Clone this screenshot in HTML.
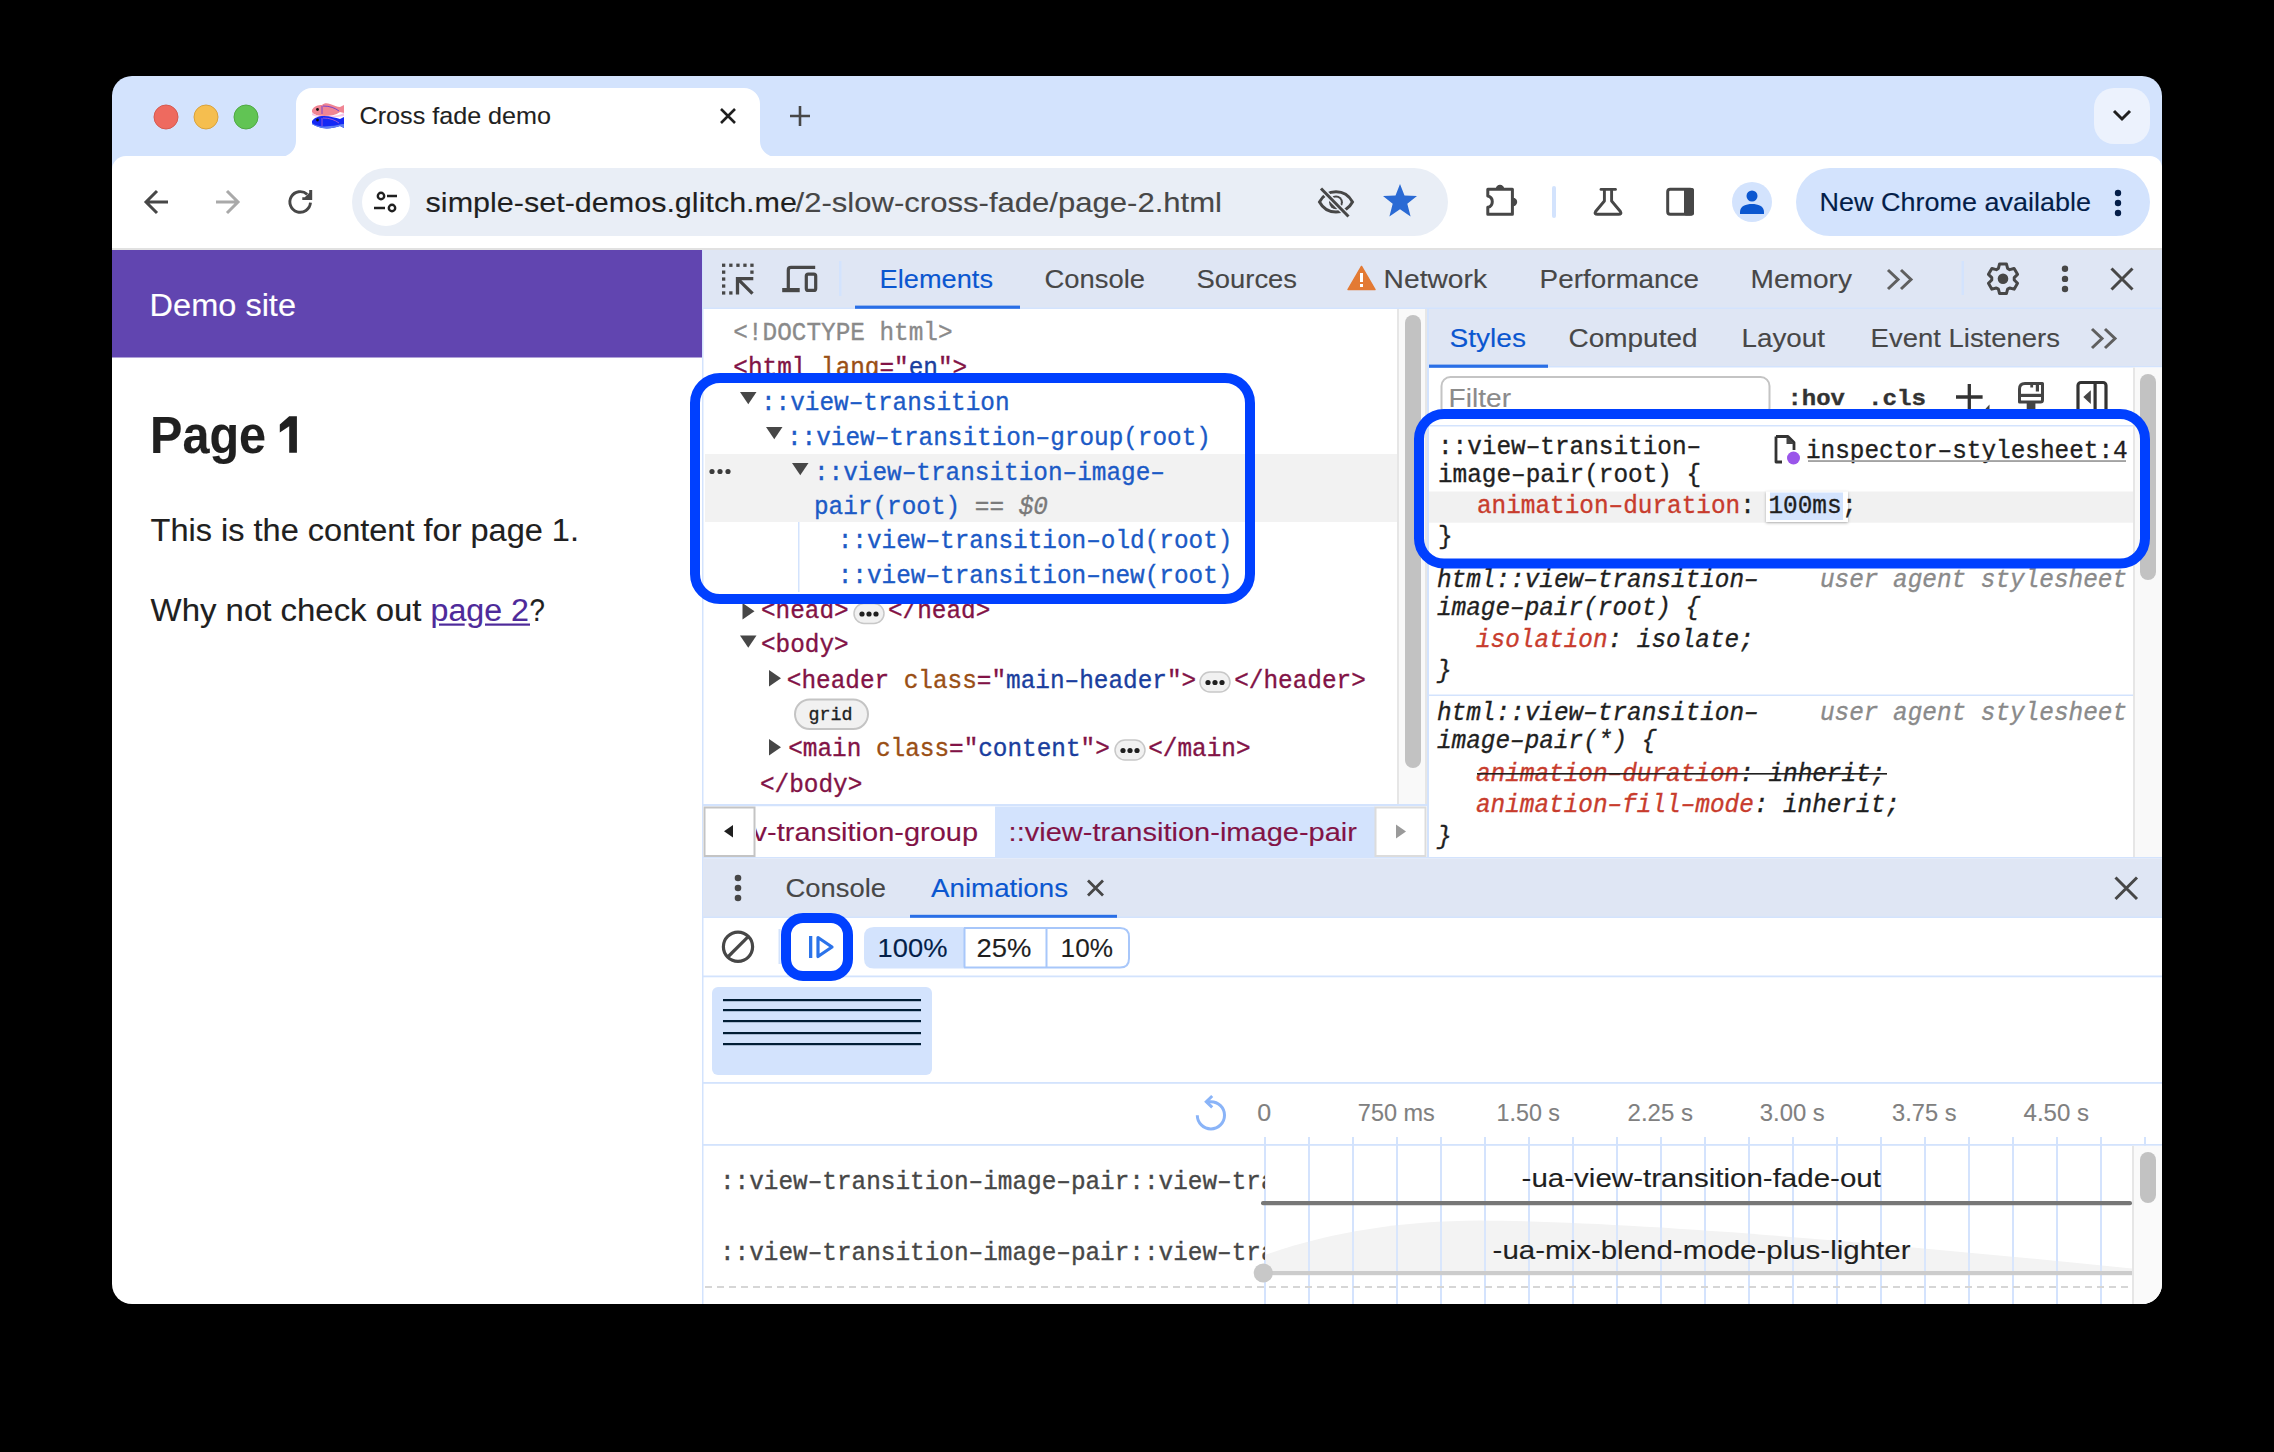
<!DOCTYPE html>
<html lang="en"><head><meta charset="utf-8"><title>Cross fade demo - DevTools</title>
<style>
html,body{margin:0;padding:0;background:#000;width:2274px;height:1452px;overflow:hidden}
svg{display:block;font-family:"Liberation Sans", sans-serif}
text{white-space:pre}
</style></head><body>
<svg width="2274" height="1452" viewBox="0 0 2274 1452">
<defs><filter id="sh" x="-20%" y="-30%" width="140%" height="160%"><feDropShadow dx="0" dy="1" stdDeviation="1.5" flood-color="#000" flood-opacity="0.3"/></filter><clipPath id="win"><rect x="112" y="76" width="2050" height="1228" rx="20"/></clipPath></defs>
<rect x="0" y="0" width="2274" height="1452" fill="#000"/>
<g clip-path="url(#win)">
<rect x="112" y="76" width="2050" height="180" rx="0" fill="#d3e3fd" />
<circle cx="166" cy="117" r="12" fill="#ee6a5f" stroke="#d65a4f" stroke-width="1"/>
<circle cx="206" cy="117" r="12" fill="#f5be4f" stroke="#d9a23c" stroke-width="1"/>
<circle cx="246" cy="117" r="12" fill="#61c454" stroke="#4fa843" stroke-width="1"/>
<path d="M280,157 A16,16 0 0 0 296,141 L296,104 A16,16 0 0 1 312,88 L744,88 A16,16 0 0 1 760,104 L760,141 A16,16 0 0 0 776,157 Z" fill="#ffffff" />
<path d="M312,110 C314,106 318,105 322,105 C324,103 327,103 330,104 C334,105 337,107 340,107 L344,105 L344,113 L340,112 C336,115 330,116 324,116 C319,116 314,115 312,112 Z" fill="#f08593" />
<path d="M312,113 C316,116 322,116 330,116 C336,116 340,115 344,113 L344,116 C338,117 330,118 322,117 C317,117 314,116 312,115 Z" fill="#f5c6ea" />
<circle cx="317.5" cy="109.5" r="1.4" fill="#111"/>
<path d="M322,106 L322,114 M323,106 C330,106 335,108 339,111" fill="none" stroke="#7744cc" stroke-width="1" />
<path d="M312,121 C314,118 318,116 324,116 C330,116 336,118 340,119 L344,117 L344,128 L340,126 C334,128 328,129 322,128 C317,127 314,125 312,124 Z" fill="#1428f5" />
<path d="M312,123 C316,126 322,127 330,126 C336,126 340,124 344,124 L344,128 L340,126 C334,128 328,129 322,128 C317,127 314,125 312,124 Z" fill="#5f7ef2" />
<circle cx="317.5" cy="120" r="1.4" fill="#111"/>
<path d="M322,118 L322,126 M323,118 C330,118 335,120 339,123" fill="none" stroke="#9a55d8" stroke-width="1" />
<text x="359.6" y="124" font-size="24" fill="#1f1f1f" textLength="191.4" lengthAdjust="spacingAndGlyphs" stroke="#1f1f1f" stroke-width="0.12" >Cross fade demo</text>
<path d="M721,109 L735,123 M735,109 L721,123" fill="none" stroke="#1f1f1f" stroke-width="2.6" />
<path d="M800,106 L800,126 M790,116 L810,116" fill="none" stroke="#474747" stroke-width="2.6" />
<rect x="2094" y="88" width="56" height="56" rx="20" fill="#ecf2fd" />
<path d="M2114,111 L2122,119 L2130,111" fill="none" stroke="#1f1f1f" stroke-width="3" />
<path d="M112,248 L112,170 A14,14 0 0 1 126,156 L2150,156 A12,12 0 0 1 2162,168 L2162,248 Z" fill="#ffffff" />
<rect x="112" y="248" width="2050" height="2" rx="0" fill="#e1e1e1" />
<path d="M168,202 L146,202 M157,191 L146,202 L157,213" fill="none" stroke="#474747" stroke-width="3" />
<path d="M216,202 L238,202 M227,191 L238,202 L227,213" fill="none" stroke="#a9a9a9" stroke-width="3" />
<path d="M310.46,202.7 A10.3,10.3 0 1 1 307.2,194.4" fill="none" stroke="#474747" stroke-width="2.9" />
<path d="M302.3,197.2 L309.2,197.2 L309.2,190 L312.2,190 L312.2,200 L302.3,200 Z M304.5,197.5 L309.5,192.5 L309.5,197.5 Z" fill="#474747" />
<rect x="352" y="168" width="1096" height="68" rx="34" fill="#e9eef6" />
<circle cx="386" cy="202" r="24" fill="#ffffff"/>
<circle cx="381" cy="196" r="3.2" fill="none" stroke="#1f1f1f" stroke-width="2.4"/>
<path d="M387,196 L397,196 M374,208 L385,208" fill="none" stroke="#1f1f1f" stroke-width="2.6" />
<circle cx="392" cy="208" r="3.2" fill="none" stroke="#1f1f1f" stroke-width="2.4"/>
<text x="425.6" y="212" font-size="28" fill="#1f1f1f" textLength="371.4" lengthAdjust="spacingAndGlyphs" stroke="#1f1f1f" stroke-width="0.12" >simple-set-demos.glitch.me</text>
<text x="795.6" y="212" font-size="28" fill="#474747" textLength="426.4" lengthAdjust="spacingAndGlyphs" stroke="#474747" stroke-width="0.12" >/2-slow-cross-fade/page-2.html</text>
<path d="M1319.5,202 C1323,195.5 1329,191.8 1336,191.8 C1343,191.8 1349,195.5 1352.5,202 C1349,208.5 1343,212 1336,212 C1329,212 1323,208.5 1319.5,202 Z" fill="none" stroke="#474747" stroke-width="3" />
<circle cx="1336" cy="202.3" r="6.9" fill="#474747"/>
<path d="M1332.5,198.8 A4.95,4.95 0 0 1 1339.5,205.8 Z" fill="#e9eef6" />
<path d="M1321,188.5 L1348.5,216.5" fill="none" stroke="#e9eef6" stroke-width="5.6" />
<path d="M1321,188.5 L1348.5,216.5" fill="none" stroke="#474747" stroke-width="3" />
<path d="M1400,184 L1404.5,195.5 L1417,196 L1407.3,203.8 L1410.6,216.5 L1400,209.2 L1389.4,216.5 L1392.7,203.8 L1383,196 L1395.5,195.5 Z" fill="#2a6ad4" />
<path d="M1487.8,189.2 L1512.4,189.2 L1512.4,214.3 L1487.8,214.3 L1487.8,207.3 A5.8,5.8 0 0 0 1487.8,196 Z" fill="none" stroke="#474747" stroke-width="3" stroke-linejoin="round"/>
<path d="M1495.8,189 A4.2,4.2 0 0 1 1504.2,189 Z" fill="#474747" />
<path d="M1513,197.8 A4.2,4.2 0 0 1 1513,206.2 Z" fill="#474747" />
<rect x="1552" y="186" width="4" height="32" rx="2" fill="#d3e3fd" />
<path d="M1601,189.4 L1615.5,189.4" fill="none" stroke="#474747" stroke-width="2.8" stroke-linecap="round"/>
<path d="M1604.4,189.4 L1604.4,201 L1595.6,211.5 Q1594,214.3 1597.5,214.3 L1618.5,214.3 Q1622,214.3 1620.4,211.5 L1611.6,201 L1611.6,189.4" fill="none" stroke="#474747" stroke-width="2.9" stroke-linejoin="round"/>
<rect x="1667.7" y="189.2" width="24.8" height="25.1" rx="2.5" fill="none" stroke="#474747" stroke-width="3"/>
<rect x="1684" y="188" width="10" height="27.5" rx="2" fill="#474747" />
<circle cx="1752" cy="202" r="20" fill="#d3e3fd"/>
<circle cx="1752" cy="196" r="5.5" fill="#0b57d0"/>
<path d="M1740,212 C1740,206 1746,204 1752,204 C1758,204 1764,206 1764,212 L1764,214 L1740,214 Z" fill="#0b57d0" />
<rect x="1796" y="168" width="354" height="68" rx="34" fill="#d3e3fd" />
<text x="1819.6" y="211" font-size="25" fill="#041e49" textLength="271.4" lengthAdjust="spacingAndGlyphs" stroke="#041e49" stroke-width="0.12" >New Chrome available</text>
<circle cx="2118" cy="193" r="3.2" fill="#041e49"/>
<circle cx="2118" cy="203" r="3.2" fill="#041e49"/>
<circle cx="2118" cy="213" r="3.2" fill="#041e49"/>
<rect x="112" y="250" width="590" height="1054" rx="0" fill="#ffffff" />
<rect x="112" y="250" width="590" height="107.5" rx="0" fill="#6145b0" />
<text x="149.6" y="316" font-size="31" fill="#ffffff" textLength="146.4" lengthAdjust="spacingAndGlyphs" stroke="#ffffff" stroke-width="0.12" >Demo site</text>
<text x="150.1" y="452.7" font-size="51" fill="#202020" font-weight="bold" textLength="115.9" lengthAdjust="spacingAndGlyphs" stroke="#202020" stroke-width="0.12" >Page</text>
<path d="M289.2,416.2 L296.9,416.2 L296.9,452.7 L289.2,452.7 L289.2,426.3 L279.8,432.6 L279.8,424.4 Z" fill="#202020" />
<text x="150.6" y="541" font-size="31" fill="#202020" textLength="428.4" lengthAdjust="spacingAndGlyphs" stroke="#202020" stroke-width="0.12" >This is the content for page 1.</text>
<text x="150.6" y="621" font-size="31" fill="#202020" textLength="270.9" lengthAdjust="spacingAndGlyphs" stroke="#202020" stroke-width="0.12" >Why not check out</text>
<text x="430.6" y="621" font-size="31" fill="#4e2a9a" textLength="98.4" lengthAdjust="spacingAndGlyphs" stroke="#4e2a9a" stroke-width="0.12" >page 2</text>
<rect x="439" y="623.5" width="25.69999999999999" height="2.2" rx="0" fill="#4e2a9a" />
<rect x="485" y="623.5" width="45" height="2.2" rx="0" fill="#4e2a9a" />
<text x="529.6" y="621" font-size="31" fill="#202020" textLength="15.4" lengthAdjust="spacingAndGlyphs" stroke="#202020" stroke-width="0.12" >?</text>
<rect x="702" y="250" width="1460" height="1054" rx="0" fill="#ffffff" />
<rect x="702" y="250" width="1.5" height="1054" rx="0" fill="#d3e3fd" />
<rect x="703" y="250" width="1459" height="58" rx="0" fill="#dfe6f4" />
<rect x="703" y="307.5" width="1459" height="1.5" rx="0" fill="#d3e3fd" />
<rect x="722" y="263.6" width="3.3" height="3.3" rx="0" fill="#474747" />
<rect x="729.2" y="263.6" width="3.3" height="3.3" rx="0" fill="#474747" />
<rect x="736.3" y="263.6" width="3.3" height="3.3" rx="0" fill="#474747" />
<rect x="743.3" y="263.6" width="3.3" height="3.3" rx="0" fill="#474747" />
<rect x="750.3" y="263.6" width="3.3" height="3.3" rx="0" fill="#474747" />
<rect x="722" y="270.5" width="3.3" height="3.3" rx="0" fill="#474747" />
<rect x="722" y="277.4" width="3.3" height="3.3" rx="0" fill="#474747" />
<rect x="722" y="284.4" width="3.3" height="3.3" rx="0" fill="#474747" />
<rect x="722" y="291.3" width="3.3" height="3.3" rx="0" fill="#474747" />
<rect x="750.3" y="270.5" width="3.3" height="3.3" rx="0" fill="#474747" />
<rect x="729.2" y="291.3" width="3.3" height="3.3" rx="0" fill="#474747" />
<path d="M737.5,294.6 L737.5,278.6 L753.3,278.6 M738.5,279.6 L752.5,293.6" fill="none" stroke="#474747" stroke-width="3.3" />
<path d="M788.3,290 L788.3,270 Q788.3,267.4 791,267.4 L815.2,267.4" fill="none" stroke="#474747" stroke-width="3.2" />
<rect x="782.2" y="288" width="17.5" height="4.2" rx="0" fill="#474747" />
<rect x="806.3" y="274.1" width="9.4" height="16.3" rx="2" fill="none" stroke="#474747" stroke-width="3.2"/>
<rect x="839" y="261" width="2.5" height="35" rx="0" fill="#d3e3fd" />
<text x="879.6" y="288" font-size="26" fill="#0b57d0" textLength="113.4" lengthAdjust="spacingAndGlyphs" stroke="#0b57d0" stroke-width="0.12" >Elements</text>
<rect x="855" y="305.6" width="165" height="3.2" rx="0" fill="#2a6fe6" />
<text x="1044.6" y="288" font-size="26" fill="#474747" textLength="100.4" lengthAdjust="spacingAndGlyphs" stroke="#474747" stroke-width="0.12" >Console</text>
<text x="1196.6" y="288" font-size="26" fill="#474747" textLength="100.4" lengthAdjust="spacingAndGlyphs" stroke="#474747" stroke-width="0.12" >Sources</text>
<path d="M1361.5,266.5 L1375,289.6 L1348,289.6 Z" fill="#e37a34" stroke="#e37a34" stroke-width="1.5" stroke-linejoin="round"/>
<rect x="1360" y="273" width="3" height="9" rx="0" fill="#ffffff" />
<rect x="1360" y="284" width="3" height="3" rx="0" fill="#ffffff" />
<text x="1383.6" y="288" font-size="26" fill="#474747" textLength="103.4" lengthAdjust="spacingAndGlyphs" stroke="#474747" stroke-width="0.12" >Network</text>
<text x="1539.6" y="288" font-size="26" fill="#474747" textLength="159.4" lengthAdjust="spacingAndGlyphs" stroke="#474747" stroke-width="0.12" >Performance</text>
<text x="1750.6" y="288" font-size="26" fill="#474747" textLength="101.4" lengthAdjust="spacingAndGlyphs" stroke="#474747" stroke-width="0.12" >Memory</text>
<path d="M1888,270 L1898,279.5 L1888,289 M1901,270 L1911,279.5 L1901,289" fill="none" stroke="#5f5f5f" stroke-width="3" />
<rect x="1961.5" y="261" width="2.5" height="34" rx="0" fill="#d3e3fd" />
<polygon points="1998.40,268.48 1999.58,263.99 2006.42,263.99 2007.60,268.48 2009.64,269.66 2014.12,268.43 2017.54,274.36 2014.24,277.62 2014.24,279.98 2017.54,283.24 2014.12,289.17 2009.64,287.94 2007.60,289.12 2006.42,293.61 1999.58,293.61 1998.40,289.12 1996.36,287.94 1991.88,289.17 1988.46,283.24 1991.76,279.98 1991.76,277.62 1988.46,274.36 1991.88,268.43 1996.36,269.66" fill="none" stroke="#474747" stroke-width="3" stroke-linejoin="round"/>
<circle cx="2003" cy="278.8" r="5.3" fill="#474747"/>
<circle cx="2065" cy="268.8" r="3.2" fill="#474747"/>
<circle cx="2065" cy="278.9" r="3.2" fill="#474747"/>
<circle cx="2065" cy="289" r="3.2" fill="#474747"/>
<path d="M2111.5,268.5 L2132.5,289.5 M2132.5,268.5 L2111.5,289.5" fill="none" stroke="#474747" stroke-width="3" />
<rect x="705" y="454" width="692" height="68" rx="0" fill="#f2f2f2" />
<text x="733.3" y="340" font-size="25" fill="#8a8a8a" font-family='"Liberation Mono", monospace' textLength="219.3" lengthAdjust="spacingAndGlyphs" stroke="#8a8a8a" stroke-width="0.35" >&lt;!DOCTYPE html&gt;</text>
<text x="733.3" y="374.5" font-size="25" fill="#821346" font-family='"Liberation Mono", monospace' textLength="73.1" lengthAdjust="spacingAndGlyphs" stroke="#821346" stroke-width="0.35" >&lt;html</text>
<text x="821.02" y="374.5" font-size="25" fill="#9a4f15" font-family='"Liberation Mono", monospace' textLength="58.48" lengthAdjust="spacingAndGlyphs" stroke="#9a4f15" stroke-width="0.35" >lang</text>
<text x="879.5" y="374.5" font-size="25" fill="#821346" font-family='"Liberation Mono", monospace' textLength="29.24" lengthAdjust="spacingAndGlyphs" stroke="#821346" stroke-width="0.35" >="</text>
<text x="908.74" y="374.5" font-size="25" fill="#1a3e9e" font-family='"Liberation Mono", monospace' textLength="29.24" lengthAdjust="spacingAndGlyphs" stroke="#1a3e9e" stroke-width="0.35" >en</text>
<text x="937.98" y="374.5" font-size="25" fill="#821346" font-family='"Liberation Mono", monospace' textLength="29.24" lengthAdjust="spacingAndGlyphs" stroke="#821346" stroke-width="0.35" >"&gt;</text>
<path d="M740,392 L756.5,392 L748.25,404.3 Z" fill="#474747" />
<text x="761" y="409.6" font-size="25" fill="#1b5ac6" font-family='"Liberation Mono", monospace' textLength="248.54" lengthAdjust="spacingAndGlyphs" stroke="#1b5ac6" stroke-width="0.35" >::view–transition</text>
<path d="M766,427 L782.5,427 L774.25,439.3 Z" fill="#474747" />
<text x="787" y="444.6" font-size="25" fill="#1b5ac6" font-family='"Liberation Mono", monospace' textLength="423.98" lengthAdjust="spacingAndGlyphs" stroke="#1b5ac6" stroke-width="0.35" >::view–transition–group(root)</text>
<circle cx="712" cy="471.5" r="2.6" fill="#3c3c3c"/>
<circle cx="720" cy="471.5" r="2.6" fill="#3c3c3c"/>
<circle cx="728" cy="471.5" r="2.6" fill="#3c3c3c"/>
<path d="M792,463 L808.5,463 L800.25,475.3 Z" fill="#474747" />
<text x="814" y="480.2" font-size="25" fill="#1b5ac6" font-family='"Liberation Mono", monospace' textLength="350.88" lengthAdjust="spacingAndGlyphs" stroke="#1b5ac6" stroke-width="0.35" >::view–transition–image–</text>
<text x="814" y="513.6" font-size="25" fill="#1b5ac6" font-family='"Liberation Mono", monospace' textLength="146.2" lengthAdjust="spacingAndGlyphs" stroke="#1b5ac6" stroke-width="0.35" >pair(root)</text>
<text x="960.2" y="513.6" font-size="25" fill="#7a7a7a" font-family='"Liberation Mono", monospace' textLength="58.48" lengthAdjust="spacingAndGlyphs" stroke="#7a7a7a" stroke-width="0.35" > == </text>
<text x="1018.68" y="513.6" font-size="25" fill="#7a7a7a" font-family='"Liberation Mono", monospace' font-style="italic" textLength="29.24" lengthAdjust="spacingAndGlyphs" stroke="#7a7a7a" stroke-width="0.35" >$0</text>
<rect x="798" y="522" width="1.5" height="70" rx="0" fill="#d3e3fd" />
<text x="837.7" y="547.7" font-size="25" fill="#1b5ac6" font-family='"Liberation Mono", monospace' textLength="394.74" lengthAdjust="spacingAndGlyphs" stroke="#1b5ac6" stroke-width="0.35" >::view–transition–old(root)</text>
<text x="837.7" y="582.5" font-size="25" fill="#1b5ac6" font-family='"Liberation Mono", monospace' textLength="394.74" lengthAdjust="spacingAndGlyphs" stroke="#1b5ac6" stroke-width="0.35" >::view–transition–new(root)</text>
<path d="M742.5,603 L754.5,611.2 L742.5,619.4 Z" fill="#474747" />
<text x="761" y="618" font-size="25" fill="#821346" font-family='"Liberation Mono", monospace' textLength="87.72" lengthAdjust="spacingAndGlyphs" stroke="#821346" stroke-width="0.35" >&lt;head&gt;</text>
<rect x="854" y="603.5" width="30" height="20" rx="10.0" fill="#f1f1f1" stroke="#c8c8c8" stroke-width="1.5"/>
<circle cx="862.0" cy="614.0" r="2.6" fill="#1f1f1f"/>
<circle cx="869.0" cy="614.0" r="2.6" fill="#1f1f1f"/>
<circle cx="876.0" cy="614.0" r="2.6" fill="#1f1f1f"/>
<text x="888" y="618" font-size="25" fill="#821346" font-family='"Liberation Mono", monospace' textLength="102.34" lengthAdjust="spacingAndGlyphs" stroke="#821346" stroke-width="0.35" >&lt;/head&gt;</text>
<path d="M740,635.5 L756.5,635.5 L748.25,647.8 Z" fill="#474747" />
<text x="761" y="652" font-size="25" fill="#821346" font-family='"Liberation Mono", monospace' textLength="87.72" lengthAdjust="spacingAndGlyphs" stroke="#821346" stroke-width="0.35" >&lt;body&gt;</text>
<path d="M769,670 L781,678.2 L769,686.4 Z" fill="#474747" />
<text x="786.8" y="687.7" font-size="25" fill="#821346" font-family='"Liberation Mono", monospace' textLength="102.34" lengthAdjust="spacingAndGlyphs" stroke="#821346" stroke-width="0.35" >&lt;header</text>
<text x="903.76" y="687.7" font-size="25" fill="#9a4f15" font-family='"Liberation Mono", monospace' textLength="73.1" lengthAdjust="spacingAndGlyphs" stroke="#9a4f15" stroke-width="0.35" >class</text>
<text x="976.86" y="687.7" font-size="25" fill="#821346" font-family='"Liberation Mono", monospace' textLength="29.24" lengthAdjust="spacingAndGlyphs" stroke="#821346" stroke-width="0.35" >="</text>
<text x="1006.1" y="687.7" font-size="25" fill="#1a3e9e" font-family='"Liberation Mono", monospace' textLength="160.82" lengthAdjust="spacingAndGlyphs" stroke="#1a3e9e" stroke-width="0.35" >main–header</text>
<text x="1166.92" y="687.7" font-size="25" fill="#821346" font-family='"Liberation Mono", monospace' textLength="29.24" lengthAdjust="spacingAndGlyphs" stroke="#821346" stroke-width="0.35" >"&gt;</text>
<rect x="1200" y="672" width="30" height="20" rx="10.0" fill="#f1f1f1" stroke="#c8c8c8" stroke-width="1.5"/>
<circle cx="1208.0" cy="682.5" r="2.6" fill="#1f1f1f"/>
<circle cx="1215.0" cy="682.5" r="2.6" fill="#1f1f1f"/>
<circle cx="1222.0" cy="682.5" r="2.6" fill="#1f1f1f"/>
<text x="1234.2" y="687.7" font-size="25" fill="#821346" font-family='"Liberation Mono", monospace' textLength="131.58" lengthAdjust="spacingAndGlyphs" stroke="#821346" stroke-width="0.35" >&lt;/header&gt;</text>
<rect x="795" y="699.5" width="73" height="29.5" rx="14.75" fill="#f1f1f1" stroke="#c4c4c4" stroke-width="2"/>
<text x="808.5" y="720" font-size="19" fill="#1f1f1f" font-family='"Liberation Mono", monospace' textLength="44" lengthAdjust="spacingAndGlyphs" stroke="#1f1f1f" stroke-width="0.35" >grid</text>
<path d="M769,739 L781,747.2 L769,755.4 Z" fill="#474747" />
<text x="788.2" y="756" font-size="25" fill="#821346" font-family='"Liberation Mono", monospace' textLength="73.1" lengthAdjust="spacingAndGlyphs" stroke="#821346" stroke-width="0.35" >&lt;main</text>
<text x="875.92" y="756" font-size="25" fill="#9a4f15" font-family='"Liberation Mono", monospace' textLength="73.1" lengthAdjust="spacingAndGlyphs" stroke="#9a4f15" stroke-width="0.35" >class</text>
<text x="949.02" y="756" font-size="25" fill="#821346" font-family='"Liberation Mono", monospace' textLength="29.24" lengthAdjust="spacingAndGlyphs" stroke="#821346" stroke-width="0.35" >="</text>
<text x="978.26" y="756" font-size="25" fill="#1a3e9e" font-family='"Liberation Mono", monospace' textLength="102.34" lengthAdjust="spacingAndGlyphs" stroke="#1a3e9e" stroke-width="0.35" >content</text>
<text x="1080.6" y="756" font-size="25" fill="#821346" font-family='"Liberation Mono", monospace' textLength="29.24" lengthAdjust="spacingAndGlyphs" stroke="#821346" stroke-width="0.35" >"&gt;</text>
<rect x="1115" y="740" width="30" height="20" rx="10.0" fill="#f1f1f1" stroke="#c8c8c8" stroke-width="1.5"/>
<circle cx="1123.0" cy="750.5" r="2.6" fill="#1f1f1f"/>
<circle cx="1130.0" cy="750.5" r="2.6" fill="#1f1f1f"/>
<circle cx="1137.0" cy="750.5" r="2.6" fill="#1f1f1f"/>
<text x="1148.2" y="756" font-size="25" fill="#821346" font-family='"Liberation Mono", monospace' textLength="102.34" lengthAdjust="spacingAndGlyphs" stroke="#821346" stroke-width="0.35" >&lt;/main&gt;</text>
<text x="760" y="792" font-size="25" fill="#821346" font-family='"Liberation Mono", monospace' textLength="102.34" lengthAdjust="spacingAndGlyphs" stroke="#821346" stroke-width="0.35" >&lt;/body&gt;</text>
<rect x="1397" y="309" width="30" height="495" rx="0" fill="#f9f9f9" />
<rect x="1397" y="309" width="2" height="495" rx="0" fill="#e6e6e6" />
<rect x="1425" y="309" width="2" height="495" rx="0" fill="#e6e6e6" />
<rect x="1405" y="315" width="16" height="453" rx="8" fill="#c2c2c2" />
<rect x="1427" y="309" width="2" height="549" rx="0" fill="#d3e3fd" />
<rect x="703" y="804" width="724" height="2.5" rx="0" fill="#d3e3fd" />
<rect x="703" y="806.5" width="724" height="50.5" rx="0" fill="#ffffff" />
<rect x="995" y="806.5" width="380" height="50.5" rx="0" fill="#d3e3fd" />
<clipPath id="crumb"><rect x="756" y="806" width="239" height="51"/></clipPath><g clip-path="url(#crumb)">
<text x="752.6" y="841" font-size="26" fill="#821346" textLength="225.4" lengthAdjust="spacingAndGlyphs" stroke="#821346" stroke-width="0.12" >v-transition-group</text>
</g>
<text x="1008.6" y="841" font-size="26" fill="#821346" textLength="348.4" lengthAdjust="spacingAndGlyphs" stroke="#821346" stroke-width="0.12" >::view-transition-image-pair</text>
<rect x="704.5" y="807.5" width="50" height="48.5" rx="0" fill="#ffffff" stroke="#c4c4c4" stroke-width="2"/>
<path d="M733,825 L733,837.5 L724,831.2 Z" fill="#1f1f1f" />
<rect x="1375.5" y="807.5" width="50" height="48.5" rx="0" fill="#ffffff" stroke="#dcdcdc" stroke-width="2"/>
<path d="M1396,824.5 L1406,831.5 L1396,838.5 Z" fill="#9a9a9a" />
<rect x="1429" y="309" width="733" height="58" rx="0" fill="#dfe6f4" />
<rect x="1429" y="366" width="733" height="1.5" rx="0" fill="#d3e3fd" />
<text x="1449.6" y="346.6" font-size="26" fill="#0b57d0" textLength="76.4" lengthAdjust="spacingAndGlyphs" stroke="#0b57d0" stroke-width="0.12" >Styles</text>
<rect x="1429" y="364.6" width="119" height="3.2" rx="0" fill="#2a6fe6" />
<text x="1568.6" y="346.6" font-size="26" fill="#474747" textLength="128.9" lengthAdjust="spacingAndGlyphs" stroke="#474747" stroke-width="0.12" >Computed</text>
<text x="1741.6" y="346.6" font-size="26" fill="#474747" textLength="83.4" lengthAdjust="spacingAndGlyphs" stroke="#474747" stroke-width="0.12" >Layout</text>
<text x="1870.6" y="346.6" font-size="26" fill="#474747" textLength="189.4" lengthAdjust="spacingAndGlyphs" stroke="#474747" stroke-width="0.12" >Event Listeners</text>
<path d="M2092,329 L2102,338.5 L2092,348 M2105,329 L2115,338.5 L2105,348" fill="none" stroke="#5f5f5f" stroke-width="3" />
<rect x="1441.5" y="377" width="328" height="40" rx="9" fill="#ffffff" stroke="#c4c4c4" stroke-width="2"/>
<text x="1448.6" y="407" font-size="26" fill="#8b8b8b" textLength="62.4" lengthAdjust="spacingAndGlyphs" stroke="#8b8b8b" stroke-width="0.12" >Filter</text>
<text x="1787.5" y="404.6" font-size="22" fill="#333333" font-family='"Liberation Mono", monospace' font-weight="bold" textLength="57.5" lengthAdjust="spacingAndGlyphs" stroke="#333333" stroke-width="0.35" >:hov</text>
<text x="1868" y="404.6" font-size="22" fill="#333333" font-family='"Liberation Mono", monospace' font-weight="bold" textLength="58" lengthAdjust="spacingAndGlyphs" stroke="#333333" stroke-width="0.35" >.cls</text>
<path d="M1969.3,384 L1969.3,410 M1956,397 L1982.6,397" fill="none" stroke="#333333" stroke-width="3.3" />
<path d="M1989.5,404.5 L1989.5,411 L1983.5,411 Z" fill="#444444" />
<path d="M2019.5,402 L2019.5,389 Q2019.5,383.4 2025,383.4 L2042.5,383.4 L2042.5,400 Q2042.5,402 2040.5,402 L2021.5,402 Q2019.5,402 2019.5,400 Z" fill="none" stroke="#444444" stroke-width="3" stroke-linejoin="round"/>
<rect x="2020" y="393.8" width="22" height="3.2" rx="0" fill="#444444" />
<rect x="2030.3" y="384" width="2.8" height="3.5" rx="0" fill="#444444" />
<rect x="2035.8" y="384" width="3.2" height="7.5" rx="0" fill="#444444" />
<rect x="2026.7" y="402" width="8.7" height="8" rx="0" fill="#444444" />
<rect x="2078" y="382.5" width="28" height="30" rx="3" fill="none" stroke="#333333" stroke-width="3.2"/>
<rect x="2093.5" y="382.5" width="3.2" height="30" rx="0" fill="#333333" />
<path d="M2090.8,390.2 L2090.8,404 L2083.3,397.1 Z" fill="#444444" />
<rect x="2133" y="367.5" width="29" height="490" rx="0" fill="#f9f9f9" />
<rect x="2133" y="367.5" width="2" height="490" rx="0" fill="#e6e6e6" />
<rect x="2140" y="374" width="16" height="206" rx="8" fill="#c2c2c2" />
<rect x="1429" y="425" width="704" height="1.5" rx="0" fill="#d3e3fd" />
<rect x="1429" y="491.5" width="704" height="31.2" rx="0" fill="#f1f1f1" />
<text x="1438" y="454" font-size="25" fill="#1f1f1f" font-family='"Liberation Mono", monospace' textLength="263.16" lengthAdjust="spacingAndGlyphs" stroke="#1f1f1f" stroke-width="0.35" >::view–transition–</text>
<text x="1438" y="481.6" font-size="25" fill="#1f1f1f" font-family='"Liberation Mono", monospace' textLength="263.16" lengthAdjust="spacingAndGlyphs" stroke="#1f1f1f" stroke-width="0.35" >image–pair(root) {</text>
<text x="1477" y="513.4" font-size="25" fill="#c83c2d" font-family='"Liberation Mono", monospace' textLength="263.16" lengthAdjust="spacingAndGlyphs" stroke="#c83c2d" stroke-width="0.35" >animation–duration</text>
<text x="1740.16" y="513.4" font-size="25" fill="#1f1f1f" font-family='"Liberation Mono", monospace' textLength="14.62" lengthAdjust="spacingAndGlyphs" stroke="#1f1f1f" stroke-width="0.35" >:</text>
<rect x="1766" y="491.5" width="82" height="30.5" rx="0" fill="#ffffff" filter="url(#sh)"/>
<rect x="1770" y="492.5" width="73" height="27.5" rx="0" fill="#d3e3fd" />
<text x="1768.5" y="513.4" font-size="25" fill="#1f1f1f" font-family='"Liberation Mono", monospace' textLength="73.1" lengthAdjust="spacingAndGlyphs" stroke="#1f1f1f" stroke-width="0.35" >100ms</text>
<text x="1842" y="513.4" font-size="25" fill="#1f1f1f" font-family='"Liberation Mono", monospace' textLength="14.62" lengthAdjust="spacingAndGlyphs" stroke="#1f1f1f" stroke-width="0.35" >;</text>
<text x="1438" y="544.2" font-size="25" fill="#1f1f1f" font-family='"Liberation Mono", monospace' textLength="14.62" lengthAdjust="spacingAndGlyphs" stroke="#1f1f1f" stroke-width="0.35" >}</text>
<path d="M1776,436.5 L1788,436.5 L1794,442.5 L1794,450 M1782,462 L1776,462 L1776,436.5" fill="none" stroke="#333333" stroke-width="2.8" stroke-linejoin="round"/>
<path d="M1786.5,436.5 L1794,444 L1786.5,444 Z" fill="#444444" />
<circle cx="1793.5" cy="458" r="6.5" fill="#9a55ea"/>
<text x="1806" y="457.8" font-size="25" fill="#1f1f1f" font-family='"Liberation Mono", monospace' textLength="321.64" lengthAdjust="spacingAndGlyphs" stroke="#1f1f1f" stroke-width="0.35" >inspector–stylesheet:4</text>
<rect x="1808" y="460.1" width="318" height="1.9" rx="0" fill="#a3a3a3" />
<rect x="1429" y="561.5" width="704" height="1.5" rx="0" fill="#d3e3fd" />
<text x="1437" y="587" font-size="25" fill="#1f1f1f" font-family='"Liberation Mono", monospace' font-style="italic" textLength="321.64" lengthAdjust="spacingAndGlyphs" stroke="#1f1f1f" stroke-width="0.35" >html::view–transition–</text>
<text x="1820" y="587" font-size="25" fill="#8a8a8a" font-family='"Liberation Mono", monospace' font-style="italic" textLength="307.02" lengthAdjust="spacingAndGlyphs" stroke="#8a8a8a" stroke-width="0.35" >user agent stylesheet</text>
<text x="1437" y="614.8" font-size="25" fill="#1f1f1f" font-family='"Liberation Mono", monospace' font-style="italic" textLength="263.16" lengthAdjust="spacingAndGlyphs" stroke="#1f1f1f" stroke-width="0.35" >image–pair(root) {</text>
<text x="1476" y="646.8" font-size="25" fill="#c83c2d" font-family='"Liberation Mono", monospace' font-style="italic" textLength="131.58" lengthAdjust="spacingAndGlyphs" stroke="#c83c2d" stroke-width="0.35" >isolation</text>
<text x="1607.58" y="646.8" font-size="25" fill="#1f1f1f" font-family='"Liberation Mono", monospace' font-style="italic" textLength="146.2" lengthAdjust="spacingAndGlyphs" stroke="#1f1f1f" stroke-width="0.35" >: isolate;</text>
<text x="1437" y="677.8" font-size="25" fill="#1f1f1f" font-family='"Liberation Mono", monospace' font-style="italic" textLength="14.62" lengthAdjust="spacingAndGlyphs" stroke="#1f1f1f" stroke-width="0.35" >}</text>
<rect x="1429" y="694.5" width="704" height="1.5" rx="0" fill="#d3e3fd" />
<text x="1437" y="720" font-size="25" fill="#1f1f1f" font-family='"Liberation Mono", monospace' font-style="italic" textLength="321.64" lengthAdjust="spacingAndGlyphs" stroke="#1f1f1f" stroke-width="0.35" >html::view–transition–</text>
<text x="1820" y="720" font-size="25" fill="#8a8a8a" font-family='"Liberation Mono", monospace' font-style="italic" textLength="307.02" lengthAdjust="spacingAndGlyphs" stroke="#8a8a8a" stroke-width="0.35" >user agent stylesheet</text>
<text x="1437" y="748" font-size="25" fill="#1f1f1f" font-family='"Liberation Mono", monospace' font-style="italic" textLength="219.3" lengthAdjust="spacingAndGlyphs" stroke="#1f1f1f" stroke-width="0.35" >image–pair(*) {</text>
<text x="1476" y="781" font-size="25" fill="#c83c2d" font-family='"Liberation Mono", monospace' font-style="italic" textLength="263.16" lengthAdjust="spacingAndGlyphs" stroke="#c83c2d" stroke-width="0.35" >animation–duration</text>
<text x="1739.16" y="781" font-size="25" fill="#1f1f1f" font-family='"Liberation Mono", monospace' font-style="italic" textLength="146.2" lengthAdjust="spacingAndGlyphs" stroke="#1f1f1f" stroke-width="0.35" >: inherit;</text>
<rect x="1477" y="773" width="410" height="1.6" rx="0" fill="#1f1f1f" />
<text x="1476" y="812" font-size="25" fill="#c83c2d" font-family='"Liberation Mono", monospace' font-style="italic" textLength="277.78" lengthAdjust="spacingAndGlyphs" stroke="#c83c2d" stroke-width="0.35" >animation–fill–mode</text>
<text x="1753.78" y="812" font-size="25" fill="#1f1f1f" font-family='"Liberation Mono", monospace' font-style="italic" textLength="146.2" lengthAdjust="spacingAndGlyphs" stroke="#1f1f1f" stroke-width="0.35" >: inherit;</text>
<text x="1437" y="844" font-size="25" fill="#1f1f1f" font-family='"Liberation Mono", monospace' font-style="italic" textLength="14.62" lengthAdjust="spacingAndGlyphs" stroke="#1f1f1f" stroke-width="0.35" >}</text>
<rect x="703" y="857" width="1459" height="1.5" rx="0" fill="#d3e3fd" />
<rect x="703" y="858.5" width="1459" height="58.5" rx="0" fill="#dfe6f4" />
<rect x="703" y="916.5" width="1459" height="1.5" rx="0" fill="#d3e3fd" />
<circle cx="738" cy="878" r="3.3" fill="#474747"/>
<circle cx="738" cy="888" r="3.3" fill="#474747"/>
<circle cx="738" cy="898" r="3.3" fill="#474747"/>
<text x="785.6" y="897" font-size="26" fill="#474747" textLength="100.4" lengthAdjust="spacingAndGlyphs" stroke="#474747" stroke-width="0.12" >Console</text>
<text x="931.1" y="897" font-size="26" fill="#0b57d0" textLength="136.9" lengthAdjust="spacingAndGlyphs" stroke="#0b57d0" stroke-width="0.12" >Animations</text>
<path d="M1088,880.5 L1103,895.5 M1103,880.5 L1088,895.5" fill="none" stroke="#474747" stroke-width="2.8" />
<rect x="910" y="914.8" width="207" height="3.0" rx="0" fill="#2a6fe6" />
<path d="M2115.5,877.5 L2137,899 M2137,877.5 L2115.5,899" fill="none" stroke="#474747" stroke-width="3" />
<circle cx="738" cy="946.8" r="14.6" fill="none" stroke="#474747" stroke-width="3.2"/>
<path d="M727.8,957 L748.2,936.6" fill="none" stroke="#474747" stroke-width="3.2" />
<rect x="778.5" y="929" width="2" height="35" rx="0" fill="#d3e3fd" />
<rect x="809" y="936" width="3.3" height="22" rx="0" fill="#2b73ea" />
<path d="M818,937.5 L832,947 L818,956.5 Z" fill="none" stroke="#2b73ea" stroke-width="3.2" stroke-linejoin="round"/>
<path d="M964,928 L1120,928 Q1129,928 1129,937 L1129,958.5 Q1129,967.5 1120,967.5 L964,967.5" fill="none" stroke="#a8c7fa" stroke-width="2" />
<path d="M874,927 L964,927 L964,968.5 L874,968.5 Q864,968.5 864,958.5 L864,937 Q864,927 874,927 Z" fill="#d3e3fd" />
<rect x="963.5" y="928" width="2" height="39.5" rx="0" fill="#a8c7fa" />
<rect x="1045.5" y="928" width="2" height="39.5" rx="0" fill="#a8c7fa" />
<text x="877.6" y="957" font-size="26" fill="#041e49" textLength="69.9" lengthAdjust="spacingAndGlyphs" stroke="#041e49" stroke-width="0.12" >100%</text>
<text x="976.6" y="957" font-size="26" fill="#1f1f1f" textLength="54.9" lengthAdjust="spacingAndGlyphs" stroke="#1f1f1f" stroke-width="0.12" >25%</text>
<text x="1060.6" y="957" font-size="26" fill="#1f1f1f" textLength="52.4" lengthAdjust="spacingAndGlyphs" stroke="#1f1f1f" stroke-width="0.12" >10%</text>
<rect x="703" y="975.5" width="1459" height="1.8" rx="0" fill="#d3e3fd" />
<rect x="712" y="987" width="220" height="88" rx="6" fill="#d3e3fd" />
<rect x="723" y="999" width="198" height="2.2" rx="0" fill="#001d35" />
<rect x="723" y="1009" width="198" height="2.2" rx="0" fill="#001d35" />
<rect x="723" y="1020" width="198" height="2.2" rx="0" fill="#001d35" />
<rect x="723" y="1032" width="198" height="2.2" rx="0" fill="#001d35" />
<rect x="723" y="1043" width="198" height="2.2" rx="0" fill="#001d35" />
<rect x="703" y="1082" width="1459" height="1.8" rx="0" fill="#d3e3fd" />
<path d="M1197.3,1115.3 A13.6,13.6 0 1 0 1210.9,1101.7 L1206,1101.7" fill="none" stroke="#8ab4f8" stroke-width="3" />
<path d="M1212.2,1096 L1206.3,1101.7 L1212.2,1107.4" fill="none" stroke="#8ab4f8" stroke-width="3" stroke-linejoin="miter"/>
<text x="1257.35" y="1121" font-size="23" fill="#808080" textLength="13.9" lengthAdjust="spacingAndGlyphs" stroke="#808080" stroke-width="0.12" >0</text>
<text x="1357.85" y="1121" font-size="23" fill="#808080" textLength="76.9" lengthAdjust="spacingAndGlyphs" stroke="#808080" stroke-width="0.12" >750 ms</text>
<text x="1496.6" y="1121" font-size="23" fill="#808080" textLength="63.4" lengthAdjust="spacingAndGlyphs" stroke="#808080" stroke-width="0.12" >1.50 s</text>
<text x="1627.6" y="1121" font-size="23" fill="#808080" textLength="65.4" lengthAdjust="spacingAndGlyphs" stroke="#808080" stroke-width="0.12" >2.25 s</text>
<text x="1759.85" y="1121" font-size="23" fill="#808080" textLength="64.9" lengthAdjust="spacingAndGlyphs" stroke="#808080" stroke-width="0.12" >3.00 s</text>
<text x="1892.1" y="1121" font-size="23" fill="#808080" textLength="64.4" lengthAdjust="spacingAndGlyphs" stroke="#808080" stroke-width="0.12" >3.75 s</text>
<text x="2023.6" y="1121" font-size="23" fill="#808080" textLength="65.4" lengthAdjust="spacingAndGlyphs" stroke="#808080" stroke-width="0.12" >4.50 s</text>
<rect x="1264" y="1137" width="2" height="167" rx="0" fill="#d3e3fd" />
<rect x="1308" y="1137" width="2" height="167" rx="0" fill="#d3e3fd" />
<rect x="1352" y="1137" width="2" height="167" rx="0" fill="#d3e3fd" />
<rect x="1396" y="1137" width="2" height="167" rx="0" fill="#d3e3fd" />
<rect x="1440" y="1137" width="2" height="167" rx="0" fill="#d3e3fd" />
<rect x="1484" y="1137" width="2" height="167" rx="0" fill="#d3e3fd" />
<rect x="1528" y="1137" width="2" height="167" rx="0" fill="#d3e3fd" />
<rect x="1572" y="1137" width="2" height="167" rx="0" fill="#d3e3fd" />
<rect x="1616" y="1137" width="2" height="167" rx="0" fill="#d3e3fd" />
<rect x="1660" y="1137" width="2" height="167" rx="0" fill="#d3e3fd" />
<rect x="1704" y="1137" width="2" height="167" rx="0" fill="#d3e3fd" />
<rect x="1748" y="1137" width="2" height="167" rx="0" fill="#d3e3fd" />
<rect x="1792" y="1137" width="2" height="167" rx="0" fill="#d3e3fd" />
<rect x="1836" y="1137" width="2" height="167" rx="0" fill="#d3e3fd" />
<rect x="1880" y="1137" width="2" height="167" rx="0" fill="#d3e3fd" />
<rect x="1924" y="1137" width="2" height="167" rx="0" fill="#d3e3fd" />
<rect x="1968" y="1137" width="2" height="167" rx="0" fill="#d3e3fd" />
<rect x="2012" y="1137" width="2" height="167" rx="0" fill="#d3e3fd" />
<rect x="2056" y="1137" width="2" height="167" rx="0" fill="#d3e3fd" />
<rect x="2100" y="1137" width="2" height="167" rx="0" fill="#d3e3fd" />
<rect x="2144" y="1137" width="2" height="167" rx="0" fill="#d3e3fd" />
<rect x="703" y="1144" width="1429" height="1.8" rx="0" fill="#d3e3fd" />
<rect x="2132" y="1144" width="30" height="1.8" rx="0" fill="#d3e3fd" />
<path d="M1265,1273 L1265,1255 C1330,1232 1400,1221 1480,1220.5 C1650,1222 1900,1245 2132,1268.5 L2132,1273 Z" fill="#f3f3f3" />
<rect x="1264" y="1145.8" width="2" height="160" rx="0" fill="#d3e3fd" opacity="0.85"/>
<rect x="1308" y="1145.8" width="2" height="160" rx="0" fill="#d3e3fd" opacity="0.85"/>
<rect x="1352" y="1145.8" width="2" height="160" rx="0" fill="#d3e3fd" opacity="0.85"/>
<rect x="1396" y="1145.8" width="2" height="160" rx="0" fill="#d3e3fd" opacity="0.85"/>
<rect x="1440" y="1145.8" width="2" height="160" rx="0" fill="#d3e3fd" opacity="0.85"/>
<rect x="1484" y="1145.8" width="2" height="160" rx="0" fill="#d3e3fd" opacity="0.85"/>
<rect x="1528" y="1145.8" width="2" height="160" rx="0" fill="#d3e3fd" opacity="0.85"/>
<rect x="1572" y="1145.8" width="2" height="160" rx="0" fill="#d3e3fd" opacity="0.85"/>
<rect x="1616" y="1145.8" width="2" height="160" rx="0" fill="#d3e3fd" opacity="0.85"/>
<rect x="1660" y="1145.8" width="2" height="160" rx="0" fill="#d3e3fd" opacity="0.85"/>
<rect x="1704" y="1145.8" width="2" height="160" rx="0" fill="#d3e3fd" opacity="0.85"/>
<rect x="1748" y="1145.8" width="2" height="160" rx="0" fill="#d3e3fd" opacity="0.85"/>
<rect x="1792" y="1145.8" width="2" height="160" rx="0" fill="#d3e3fd" opacity="0.85"/>
<rect x="1836" y="1145.8" width="2" height="160" rx="0" fill="#d3e3fd" opacity="0.85"/>
<rect x="1880" y="1145.8" width="2" height="160" rx="0" fill="#d3e3fd" opacity="0.85"/>
<rect x="1924" y="1145.8" width="2" height="160" rx="0" fill="#d3e3fd" opacity="0.85"/>
<rect x="1968" y="1145.8" width="2" height="160" rx="0" fill="#d3e3fd" opacity="0.85"/>
<rect x="2012" y="1145.8" width="2" height="160" rx="0" fill="#d3e3fd" opacity="0.85"/>
<rect x="2056" y="1145.8" width="2" height="160" rx="0" fill="#d3e3fd" opacity="0.85"/>
<rect x="2100" y="1145.8" width="2" height="160" rx="0" fill="#d3e3fd" opacity="0.85"/>
<clipPath id="lab"><rect x="703" y="1146" width="562" height="160"/></clipPath>
<g clip-path="url(#lab)">
<text x="720" y="1188.6" font-size="25" fill="#474747" font-family='"Liberation Mono", monospace' textLength="804.1" lengthAdjust="spacingAndGlyphs" stroke="#474747" stroke-width="0.35" >::view–transition–image–pair::view–transition–old(root)</text>
<text x="720" y="1259.6" font-size="25" fill="#474747" font-family='"Liberation Mono", monospace' textLength="804.1" lengthAdjust="spacingAndGlyphs" stroke="#474747" stroke-width="0.35" >::view–transition–image–pair::view–transition–new(root)</text>
</g>
<rect x="1261" y="1201" width="871" height="4.2" rx="2" fill="#777777" />
<text x="1521.6" y="1187.4" font-size="26" fill="#1f1f1f" textLength="359.4" lengthAdjust="spacingAndGlyphs" stroke="#1f1f1f" stroke-width="0.12" >-ua-view-transition-fade-out</text>
<rect x="1263" y="1271" width="869" height="4.2" rx="0" fill="#cccccc" />
<circle cx="1263.3" cy="1273" r="9.6" fill="#c8c8c8"/>
<text x="1492.6" y="1259" font-size="26" fill="#1f1f1f" textLength="417.9" lengthAdjust="spacingAndGlyphs" stroke="#1f1f1f" stroke-width="0.12" >-ua-mix-blend-mode-plus-lighter</text>
<path d="M705,1287 L2132,1287" fill="none" stroke="#d6d6d6" stroke-width="2" stroke-dasharray="7 5"/>
<rect x="2132" y="1145.8" width="30" height="160" rx="0" fill="#fafafa" />
<rect x="2132" y="1145.8" width="2" height="160" rx="0" fill="#e6e6e6" />
<rect x="2140" y="1152" width="16" height="51" rx="8" fill="#c2c2c2" />
<rect x="695" y="378" width="555" height="221" rx="25" fill="none" stroke="#0040ff" stroke-width="10"/>
<rect x="1419" y="414" width="726" height="149.5" rx="25" fill="none" stroke="#0040ff" stroke-width="10"/>
<rect x="786" y="918" width="62" height="58" rx="17" fill="none" stroke="#0040ff" stroke-width="10"/>
</g>
</svg>
</body></html>
